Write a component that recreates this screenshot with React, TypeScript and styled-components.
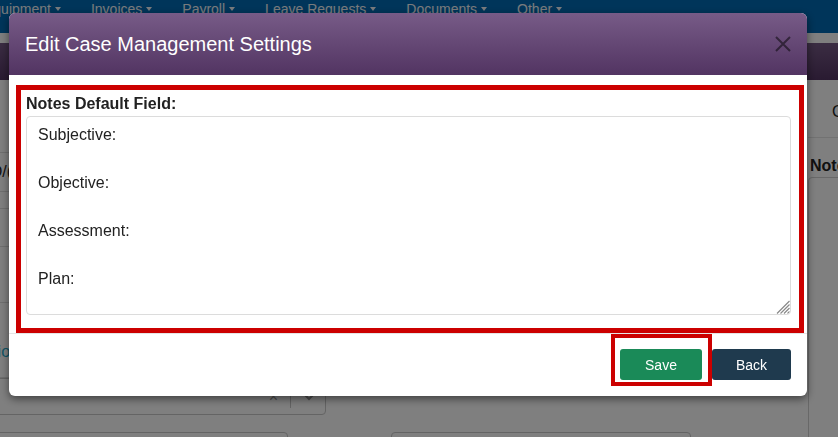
import React from 'react';
import styled, { createGlobalStyle } from 'styled-components';

const GlobalStyle = createGlobalStyle`
  html, body {
    margin: 0;
    padding: 0;
    height: 100%;
    overflow: hidden;
  }
  body {
    font-family: "Liberation Sans", Arial, sans-serif;
    color: #333;
    background: #fff;
  }
`;

/* ---------- page behind the dialog ---------- */

const Page = styled.div`
  width: 100vw;
  height: 100vh;
  display: flex;
  flex-direction: column;
  overflow: hidden;
`;

const Nav = styled.nav`
  height: 33px;
  flex-shrink: 0;
  background: #006ab4;
  display: flex;
  align-items: flex-start;
  gap: 30px;
  overflow: hidden;
`;

const NavItem = styled.span`
  display: flex;
  align-items: center;
  gap: 4px;
  margin-top: 1px;
  color: #f2f6fa;
  font-size: 14px;
  line-height: 16px;
  white-space: nowrap;

  &:first-child {
    margin-left: -16px;
  }
`;

const Caret = styled.i`
  width: 0;
  height: 0;
  border-left: 3.5px solid transparent;
  border-right: 3.5px solid transparent;
  border-top: 4px solid currentColor;
`;

const Strip = styled.div`
  height: 10px;
  flex-shrink: 0;
  background: #fff;
`;

const Banner = styled.div`
  height: 37px;
  flex-shrink: 0;
  background: linear-gradient(#765a86, #533563);
`;

const Content = styled.div`
  flex: 1;
  display: flex;
`;

const LeftCol = styled.div`
  width: 330px;
  flex-shrink: 0;
  display: flex;
  flex-direction: column;
`;

const Row = styled.div<{ $h: number; $pt?: number }>`
  box-sizing: border-box;
  height: ${({ $h }) => $h}px;
  padding-top: ${({ $pt = 0 }) => $pt}px;
  border-bottom: 1px solid #dedede;
  display: flex;
  align-items: center;
  font-size: 16px;
`;

const RowText = styled.span<{ $bold?: boolean; $link?: boolean; $indent?: number }>`
  margin-left: ${({ $indent = 52 }) => -$indent}px;
  font-weight: ${({ $bold }) => ($bold ? 'bold' : 'normal')};
  color: ${({ $link }) => ($link ? '#1fa8c9' : '#222')};
  white-space: nowrap;
`;

const SelectBox = styled.div`
  box-sizing: border-box;
  height: 37px;
  margin: 0 4px 0 -20px;
  border: 1px solid #c8c8c8;
  border-radius: 4px;
  display: flex;
  align-items: center;
  justify-content: flex-end;
  color: #999;
  font-size: 16px;
`;

const SelectClear = styled.span`
  padding: 0 12px 0 10px;
`;

const SelectArrow = styled.span`
  border-left: 1px solid #c8c8c8;
  padding: 0 10px 0 12px;
  display: flex;
  align-items: center;
  height: 22px;
`;

const InputBox = styled.div<{ $w: number }>`
  box-sizing: border-box;
  width: ${({ $w }) => $w}px;
  height: 36px;
  border: 1px solid #c8c8c8;
  border-radius: 4px;
`;

const LeftBottom = styled.div`
  margin-top: 17px;
  margin-left: -20px;
`;

const Middle = styled.div`
  flex: 1;
  padding: 352px 0 0 61px;
`;

const RightCol = styled.div`
  width: 30px;
  flex-shrink: 0;
`;

const RightHead = styled.div`
  box-sizing: border-box;
  height: 58px;
  padding: 7px 0 0 24px;
  border-bottom: 1px solid #e5e5e5;
  display: flex;
  align-items: center;
  font-size: 16px;
  color: #222;
`;

const RightLabel = styled.div`
  margin-top: 19px;
  padding-left: 2px;
  font-size: 16px;
  line-height: 18px;
  font-weight: bold;
  color: #222;
  white-space: nowrap;
`;

const RightBox = styled.div`
  margin-top: 2px;
  width: 200px;
  height: 300px;
  border: 1px solid #d0d0d0;
  border-radius: 4px;
`;

/* ---------- dialog ---------- */

const Backdrop = styled.div`
  position: fixed;
  inset: 0;
  background: rgba(0, 0, 0, 0.5);
`;

const Modal = styled.div`
  position: fixed;
  left: 9px;
  top: 13px;
  width: 798px;
  background: #fff;
  border-radius: 6px;
  box-shadow: 0 3px 9px rgba(0, 0, 0, 0.5);
  display: flex;
  flex-direction: column;
  overflow: hidden;
`;

const Header = styled.div`
  height: 62px;
  padding: 0 16px;
  display: flex;
  align-items: center;
  justify-content: space-between;
  background: linear-gradient(#775b87, #523462);
`;

const Title = styled.h4`
  margin: 0;
  font-size: 20px;
  font-weight: normal;
  line-height: 22px;
  color: #fff;
`;

const CloseButton = styled.button`
  width: 16px;
  height: 16px;
  padding: 0;
  border: 0;
  background: none;
  cursor: pointer;
  display: flex;
`;

const Body = styled.div`
  padding: 10px 3px 0 7px;
`;

const Highlight = styled.div`
  border: 5px solid #cc0000;
  padding: 5px 8px 13px 5px;
  display: flex;
  flex-direction: column;
  gap: 3px;
`;

const Label = styled.label`
  font-size: 16px;
  line-height: 18px;
  font-weight: bold;
  color: #222;
`;

const AreaWrap = styled.div`
  position: relative;
  display: flex;
`;

const NotesArea = styled.textarea`
  box-sizing: border-box;
  width: 100%;
  height: 199px;
  margin: 0;
  padding: 6px 11px;
  border: 1px solid #dcdcdc;
  border-radius: 4px;
  font-family: "Liberation Sans", Arial, sans-serif;
  font-size: 16px;
  line-height: 24px;
  color: #222;
  resize: vertical;
  outline: none;
`;

/* drawn grip sits over the native resizer so it looks like the desktop one */
const Grip = styled.svg`
  position: absolute;
  right: 1px;
  bottom: 1px;
  width: 14px;
  height: 14px;
  background: #fff;
  border-bottom-right-radius: 3px;
  pointer-events: none;
`;

const Footer = styled.div`
  border-top: 1px solid #e5e5e5;
  padding: 0 16px 10px;
  display: flex;
  justify-content: flex-end;
  align-items: flex-end;
`;

const SaveMark = styled.div`
  border: 4px solid #cc0000;
  padding: 11px 6px 2px 5px;
  display: flex;
`;

const Button = styled.button<{ $bg: string; $w: number }>`
  width: ${({ $w }) => $w}px;
  height: 31px;
  padding: 0;
  border: 0;
  border-radius: 3px;
  background: ${({ $bg }) => $bg};
  color: #fff;
  font-family: "Liberation Sans", Arial, sans-serif;
  font-size: 14px;
  cursor: pointer;
`;

const BackButton = styled(Button)`
  margin-bottom: 6px;
`;

const navItems = ['Equipment', 'Invoices', 'Payroll', 'Leave Requests', 'Documents', 'Other'];

const defaultNotes = 'Subjective:\n\nObjective:\n\nAssessment:\n\nPlan:';

const App: React.FC = () => (
  <>
    <GlobalStyle />
    <Page>
      <Nav>
        {navItems.map((item) => (
          <NavItem key={item}>
            {item}
            <Caret />
          </NavItem>
        ))}
      </Nav>
      <Strip />
      <Banner />
      <Content>
        <LeftCol>
          <Row $h={73} />
          <Row $h={39}>
            <RowText>MM/DD/(</RowText>
          </Row>
          <Row $h={17} />
          <Row $h={38} />
          <Row $h={56}>
            <RowText $bold>Servic</RowText>
          </Row>
          <Row $h={75} $pt={24}>
            <RowText $link $indent={38}>Sessio</RowText>
          </Row>
          <SelectBox>
            <SelectClear>×</SelectClear>
            <SelectArrow>
              <svg width="12" height="8" viewBox="0 0 12 8">
                <path d="M1 1l5 5 5-5" fill="none" stroke="#999" strokeWidth="2" />
              </svg>
            </SelectArrow>
          </SelectBox>
          <LeftBottom>
            <InputBox $w={308} />
          </LeftBottom>
        </LeftCol>
        <Middle>
          <InputBox $w={300} />
        </Middle>
        <RightCol>
          <RightHead>Case</RightHead>
          <RightLabel>Notes</RightLabel>
          <RightBox />
        </RightCol>
      </Content>
    </Page>
    <Backdrop />
    <Modal role="dialog">
      <Header>
        <Title>Edit Case Management Settings</Title>
        <CloseButton aria-label="Close">
          <svg width="16" height="16" viewBox="0 0 16 16">
            <path d="M1 1L15 15M15 1L1 15" stroke="rgba(0,0,0,0.5)" strokeWidth="2" />
          </svg>
        </CloseButton>
      </Header>
      <Body>
        <Highlight>
          <Label htmlFor="notes-default">Notes Default Field:</Label>
          <AreaWrap>
            <NotesArea id="notes-default" defaultValue={defaultNotes} />
            <Grip viewBox="0 0 14 14" aria-hidden="true">
              <path
                d="M13.5 1L1 13.5M13.5 4.5L4.5 13.5M13.5 8L8 13.5M13.5 11.5L11.5 13.5"
                stroke="#8a8a8a"
                strokeWidth="1.2"
                fill="none"
              />
            </Grip>
          </AreaWrap>
        </Highlight>
      </Body>
      <Footer>
        <SaveMark>
          <Button $bg="#1a8a58" $w={82}>Save</Button>
        </SaveMark>
        <BackButton $bg="#1f3a4e" $w={79}>Back</BackButton>
      </Footer>
    </Modal>
  </>
);

export default App;
